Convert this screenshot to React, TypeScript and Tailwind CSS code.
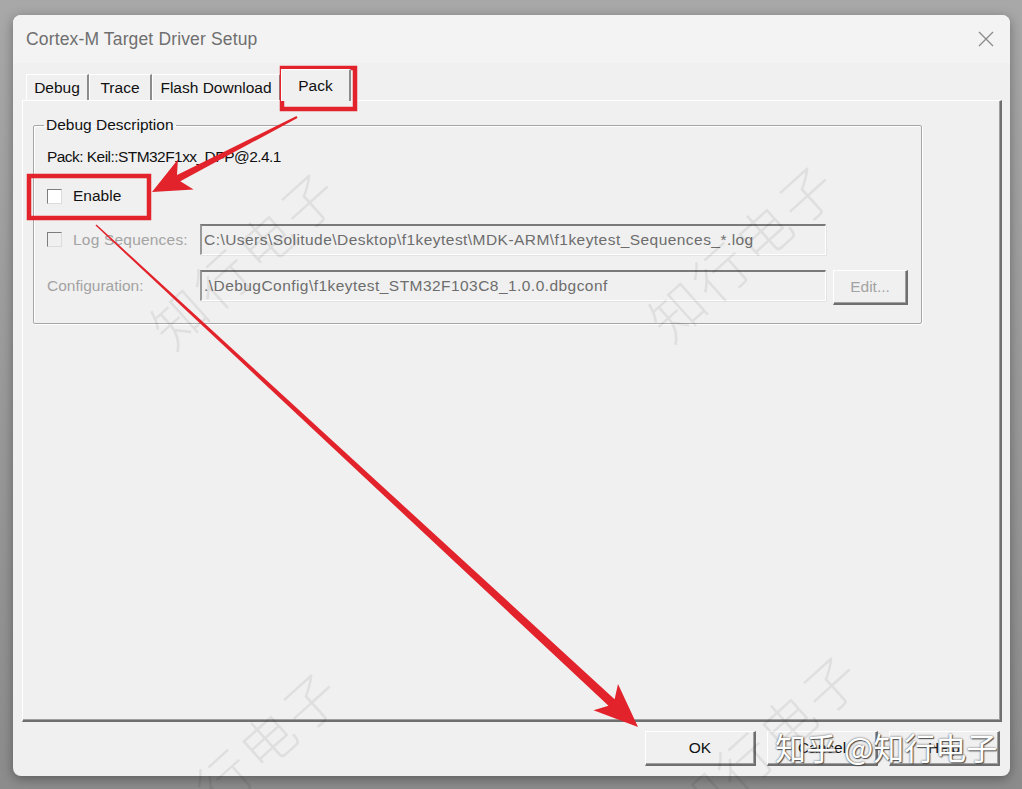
import React from 'react';

const sans = "font-['Liberation_Sans',Arial,sans-serif]";
const cjk = "font-['Noto_Sans_CJK_SC','Noto_Sans',sans-serif]";

// polygon for a tapered arrow with a barbed head
const arrowPoints = (
  x1: number, y1: number, x2: number, y2: number,
  w1: number, w2: number, hl: number, hw: number, notch: number
) => {
  const L = Math.hypot(x2 - x1, y2 - y1);
  const ux = (x2 - x1) / L;
  const uy = (y2 - y1) / L;
  const nx = -uy;
  const ny = ux;
  const bx = x2 - ux * hl;
  const by = y2 - uy * hl;
  const sx = bx + ux * notch;
  const sy = by + uy * notch;
  const p = (x: number, y: number) => `${x.toFixed(1)},${y.toFixed(1)}`;
  return [
    p(x1 + (nx * w1) / 2, y1 + (ny * w1) / 2),
    p(sx + (nx * w2) / 2, sy + (ny * w2) / 2),
    p(bx + (nx * hw) / 2, by + (ny * hw) / 2),
    p(x2, y2),
    p(bx - (nx * hw) / 2, by - (ny * hw) / 2),
    p(sx - (nx * w2) / 2, sy - (ny * w2) / 2),
    p(x1 - (nx * w1) / 2, y1 - (ny * w1) / 2),
  ].join(' ');
};

const Tab: React.FC<{ label: string; width: string; active?: boolean }> = ({ label, width, active }) =>
  active ? (
    <div
      className={`${width} h-[32px] -mb-px relative z-10 flex items-start justify-center pt-[4px] bg-[#f0f0f0] border-l border-t border-white border-r-2 border-r-[#8c8c8c] text-[15.5px] text-[#111]`}
    >
      {label}
    </div>
  ) : (
    <div
      className={`${width} h-[26px] flex items-center justify-center border-l border-t border-white border-r-2 border-r-[#8c8c8c] text-[15.5px] text-[#111]`}
    >
      {label}
    </div>
  );

const Field: React.FC<{ value: string }> = ({ value }) => (
  <div className="w-[626px] h-[31px] flex items-center pl-[2px] bg-[#f0f0f0] border-t-2 border-l-2 border-t-[#7a7a7a] border-l-[#9a9a9a] border-b border-r border-white shadow-[1px_1px_0_#e3e3e3] text-[15.5px] tracking-[0.45px] text-[#6d6d6d] whitespace-nowrap overflow-hidden">
    {value}
  </div>
);

const Checkbox: React.FC<{ disabled?: boolean }> = ({ disabled }) => (
  <div
    className={`w-[15px] h-[15px] border-t border-l border-[#7d7d7d] border-b border-r border-b-[#dcdcdc] border-r-[#dcdcdc] ${
      disabled ? 'bg-[#f0f0f0]' : 'bg-white'
    }`}
  />
);

const Button: React.FC<{ label: string; disabled?: boolean; className?: string }> = ({ label, disabled, className }) => (
  <div
    className={`h-[35px] flex items-center justify-center bg-[#f0f0f0] border-t border-l border-white border-r-2 border-b-2 border-r-[#6f6f6f] border-b-[#6f6f6f] shadow-[inset_-1px_-1px_0_#a0a0a0] text-[15.5px] ${
      disabled ? 'text-[#a3a3a3]' : 'text-[#111]'
    } ${className ?? ''}`}
  >
    {label}
  </div>
);

const Watermark: React.FC<{ x: number; y: number }> = ({ x, y }) => (
  <div
    className={`absolute ${cjk} text-[54px] leading-[70px] tracking-[4px] font-light text-black/[0.07] -rotate-[42deg] whitespace-nowrap select-none pointer-events-none`}
    style={{ left: x, top: y }}
  >
    知行电子
  </div>
);

const App: React.FC = () => {
  return (
    <div className={`relative w-[1022px] h-[789px] overflow-hidden bg-gradient-to-b from-[#a8a8a8] to-[#8c8c8c] ${sans}`}>
      <div className="absolute left-0 top-0 w-full h-full pt-[15px] pl-[13px]">
        <div className="w-[997px] h-[761px] rounded-[8px] bg-[#f0f0f0] shadow-[0_3px_12px_rgba(0,0,0,0.35)] flex flex-col overflow-hidden">
          {/* title bar */}
          <div className="h-[48px] shrink-0 flex items-center justify-between pl-[13px] pr-[15px] bg-[#f3f3f3]">
            <span className="text-[17.5px] text-[#6f6f6f] tracking-[0.15px]">Cortex-M Target Driver Setup</span>
            <svg width="18" height="18" viewBox="0 0 18 18" className="text-[#8a8a8a]">
              <path d="M2 2 L16 16 M16 2 L2 16" stroke="currentColor" strokeWidth="1.3" fill="none" />
            </svg>
          </div>

          {/* tabs */}
          <div className="mt-[6px] h-[31px] shrink-0 flex items-end pl-[13px]">
            <Tab label="Debug" width="w-[63px]" />
            <Tab label="Trace" width="w-[63px]" />
            <Tab label="Flash Download" width="w-[129px]" />
            <Tab label="Pack" width="w-[70px]" active />
          </div>

          {/* tab panel */}
          <div className="ml-[9px] mr-[8px] h-[622px] shrink-0 border-l border-t border-white border-r-2 border-b-2 border-r-[#6f6f6f] border-b-[#6f6f6f] shadow-[inset_-1px_-1px_0_#a0a0a0] pt-[15px] pl-[10px]">
            <fieldset className="w-[888px] h-[208px] border border-[#a6a6a6] rounded-[2px] shadow-[inset_1px_1px_0_#fff,1px_1px_0_#fff] px-[13px] pt-[13px]">
              <legend className="-ml-[3px] px-[2px] text-[15.5px] text-[#111] leading-[18px]">Debug Description</legend>

              <div className="h-[20px] flex items-center text-[15.5px] tracking-[-0.55px] text-[#111]">Pack: Keil::STM32F1xx_DFP@2.4.1</div>

              <div className="mt-[19px] h-[20px] flex items-center gap-[11px] text-[15.5px] text-[#111]">
                <Checkbox />
                <span>Enable</span>
              </div>

              <div className="mt-[18px] h-[31px] flex items-center">
                <div className="w-[153px] flex items-center gap-[11px] text-[15.5px] tracking-[0.2px] text-[#a3a3a3]">
                  <Checkbox disabled />
                  <span>Log Sequences:</span>
                </div>
                <Field value="C:\Users\Solitude\Desktop\f1keytest\MDK-ARM\f1keytest_Sequences_*.log" />
              </div>

              <div className="mt-[15px] h-[33px] flex items-start">
                <div className="w-[153px] h-[31px] flex items-center text-[15.5px] text-[#a3a3a3]">Configuration:</div>
                <Field value=".\DebugConfig\f1keytest_STM32F103C8_1.0.0.dbgconf" />
                <Button label="Edit..." disabled className="ml-[7px] w-[75px] h-[33px]" />
              </div>
            </fieldset>
          </div>

          {/* dialog buttons */}
          <div className="flex justify-end gap-[11px] pr-[10px] pt-[9px]">
            <Button label="OK" className="w-[111px]" />
            <Button label="Cancel" className="w-[111px]" />
            <Button label="Help" className="w-[111px]" />
          </div>
        </div>
      </div>

      {/* faint diagonal watermarks */}
      <Watermark x={128} y={222} />
      <Watermark x={626} y={215} />
      <Watermark x={130} y={722} />
      <Watermark x={650} y={705} />

      {/* annotation overlay */}
      <svg className="absolute left-0 top-0 pointer-events-none" width="1022" height="789" viewBox="0 0 1022 789">
        <rect x="282" y="68" width="73" height="41" fill="none" stroke="#e3232b" strokeWidth="4.5" />
        <rect x="29" y="176" width="120" height="42" fill="none" stroke="#e3232b" strokeWidth="4.5" />
        <polygon points={arrowPoints(297, 117, 152, 192, 2, 7, 38, 34, 8)} fill="#e3232b" />
        <polygon points={arrowPoints(96, 225, 638, 727, 1.5, 9, 44, 36, 8)} fill="#e3232b" />
      </svg>

      {/* site watermark */}
      <div
        className={`absolute left-[775px] top-[727px] ${cjk} text-[31px] leading-[40px] text-white [text-shadow:0_0_2px_#444,1px_1px_1px_#555] whitespace-nowrap`}
      >
        知乎 @知行电子
      </div>
    </div>
  );
};

export default App;
